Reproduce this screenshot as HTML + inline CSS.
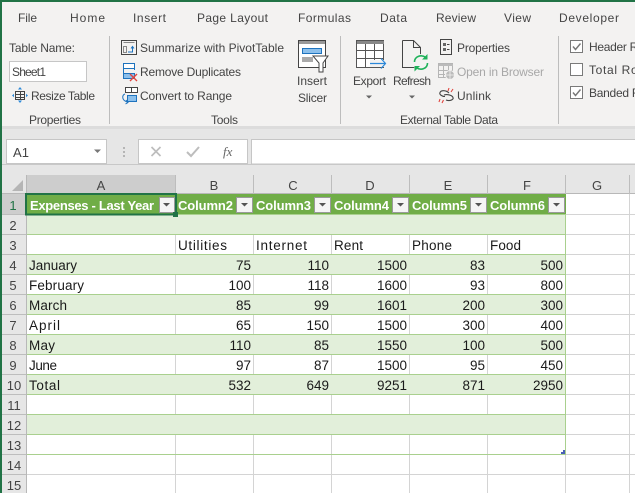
<!DOCTYPE html>
<html><head><meta charset="utf-8"><style>
html,body{margin:0;padding:0;background:#fff;width:635px;height:493px;overflow:hidden}
svg{display:block}
text{font-family:"Liberation Sans",sans-serif;font-size:12px;fill:#444}
.c text,text.c{font-size:13.5px;fill:#1a1a1a}
.h text{font-size:13px;fill:#fff;font-weight:bold}
.rn text{font-size:13px;fill:#444;text-anchor:middle}
.n text{font-size:13.5px;fill:#1a1a1a;text-anchor:end}
.cr{shape-rendering:crispEdges}
</style></head><body>
<svg width="635" height="493" viewBox="0 0 635 493" xmlns="http://www.w3.org/2000/svg">
<!-- ribbon -->
<g class="cr">
<rect width="635" height="493" fill="#fff"/>
<rect width="635" height="128" fill="#f3f2f1"/>
<rect width="635" height="2" fill="#217346"/>
<rect y="126" width="635" height="3" fill="#dcdcdc"/>
<rect y="129" width="635" height="46" fill="#e6e6e6"/>
<rect y="175" width="635" height="19" fill="#e6e6e6"/>
<rect x="109" y="36" width="1" height="88" fill="#bdbdbd"/>
<rect x="340" y="36" width="1" height="88" fill="#bdbdbd"/>
<rect x="558" y="36" width="1" height="88" fill="#bdbdbd"/>
</g>
<text x="18" y="22" textLength="19">File</text>
<text x="70" y="22" textLength="35">Home</text>
<text x="133" y="22" textLength="33">Insert</text>
<text x="197" y="22" textLength="71">Page Layout</text>
<text x="298" y="22" textLength="53">Formulas</text>
<text x="380" y="22" textLength="27">Data</text>
<text x="436" y="22" textLength="40">Review</text>
<text x="504" y="22" textLength="27">View</text>
<text x="559" y="22" textLength="60">Developer</text>

<text x="9" y="52" textLength="66">Table Name:</text>
<rect class="cr" x="9.500" y="61.500" width="77" height="20" fill="#fff" stroke="#c6c6c6"/>
<text x="12" y="76" textLength="34">Sheet1</text>
<text x="31" y="100" textLength="64">Resize Table</text>
<text x="29" y="124" textLength="52">Properties</text>
<text x="140" y="52" textLength="144">Summarize with PivotTable</text>
<text x="140" y="76" textLength="101">Remove Duplicates</text>
<text x="140" y="100" textLength="92">Convert to Range</text>
<text x="211" y="124" textLength="27">Tools</text>
<text x="297" y="85" textLength="30">Insert</text>
<text x="298" y="102" textLength="29">Slicer</text>
<text x="353" y="85" textLength="33">Export</text>
<text x="393" y="85" textLength="38">Refresh</text>
<text x="457" y="52" textLength="53">Properties</text>
<text x="457" y="76" textLength="87" style="fill:#a8a8a8">Open in Browser</text>
<text x="457" y="100" textLength="34">Unlink</text>
<text x="400" y="124" textLength="98">External Table Data</text>
<text x="589" y="51" textLength="64">Header Row</text>
<text x="589" y="74" textLength="58">Total Row</text>
<text x="589" y="97" textLength="72">Banded Rows</text>

<!-- checkboxes -->
<g class="cr" fill="#fff" stroke="#7a7a7a">
<rect x="570.500" y="40.500" width="12" height="12"/>
<rect x="570.500" y="63.500" width="12" height="12"/>
<rect x="570.500" y="86.500" width="12" height="12"/>
</g>
<path d="M573 46.500l2.500 3 5-6M573 92.500l2.500 3 5-6" fill="none" stroke="#777" stroke-width="1.400"/>

<!-- resize icon -->
<g fill="none" stroke="#444" class="cr">
<rect x="15.500" y="91.500" width="9" height="8"/>
<path d="M15 94.500h10M20.500 92v8M15 97.500h10"/>
</g>
<path d="M20 87l2 2.500h-4zM20 103l2-2.500h-4zM12 95.500l2-1.800v3.600zM28 95.500l-2-1.800v3.600z" fill="#2b88d8"/>

<!-- summarize icon -->
<g fill="none" class="cr">
<rect x="121.500" y="40.500" width="15" height="14" stroke="#444"/>
<path d="M123.500 46.500h3v6h-3zM123.500 42.500h11" stroke="#888"/>
</g>
<path d="M128 52h4.500v-5M131 48.500l1.500-2 1.500 2" fill="none" stroke="#1e73be"/>
<!-- remove dup icon -->
<g class="cr">
<rect x="123.500" y="63.500" width="11" height="5" fill="#fff" stroke="#1e73be"/>
<rect x="123.500" y="73.500" width="11" height="5" fill="#8cc0ec" stroke="#1e73be"/>
<rect x="123" y="63" width="1" height="16" fill="#1e73be"/>
<rect x="134" y="63" width="1" height="7" fill="#1e73be"/>
</g>
<path d="M130 74l7 7M137 74l-7 7" stroke="#e0443e" stroke-width="1.400"/>
<!-- convert icon -->
<g class="cr">
<rect x="125.500" y="87.500" width="6" height="5" fill="#fff" stroke="#444"/>
<rect x="131.500" y="87.500" width="6" height="5" fill="#fff" stroke="#444"/>
<rect x="127.500" y="95.500" width="9" height="6" fill="#8cc0ec" stroke="#1e73be"/>
</g>
<path d="M125 94c-3 1-3 5 0 7l3 1.500M126 100l2 2.500-2.500 1.500" fill="none" stroke="#1e73be"/>

<!-- slicer icon -->
<g class="cr">
<rect x="298.500" y="40.500" width="27" height="27" fill="#fff" stroke="#444"/>
<rect x="299" y="41" width="26" height="3" fill="#999"/>
<rect x="302.500" y="48.500" width="19" height="5" fill="#8cc0ec" stroke="#1e73be"/>
<rect x="302" y="57" width="11" height="5" fill="#aaa"/>
</g>
<path d="M313 56h15l-5 7v9h-4v-9z" fill="#fff" stroke="#444"/>

<!-- export icon -->
<g class="cr" fill="none" stroke="#555">
<rect x="356.500" y="40.500" width="27" height="27" fill="#fff" stroke="#555"/>
<rect x="357" y="41" width="27" height="3" fill="#888" stroke="none"/>
<path d="M365.500 44v23M374.500 44v23M357 50.500h27M357 58.500h27"/>
</g>
<path d="M370 63.500h14" stroke="#f3f2f1" stroke-width="7"/>
<path d="M370 63.500h15M381 58.500l4.500 5-4.500 5" fill="none" stroke="#2b88d8" stroke-width="1.200"/>
<path d="M366 95.500h6l-3 3zM409 95.500h6l-3 3z" fill="#666"/>

<!-- refresh icon -->
<path d="M402.500 40.500h11l7 7v12M413.500 41v6.500h7M402.500 40.500v27h12" fill="none" stroke="#444"/>
<circle cx="421" cy="62.500" r="8.500" fill="#f3f2f1"/>
<path d="M414.500 62c0-5.500 6.500-8 11.500-4.500M427.500 63c0 5.500-6.500 8-11.500 4.500" fill="none" stroke="#1fb25a" stroke-width="1.600"/>
<path d="M427.500 54v5.500h-5.500zM414.500 71.500v-5.500h5.500z" fill="#1fb25a"/>

<!-- properties icon -->
<g class="cr" fill="none" stroke="#444">
<rect x="440.500" y="39.500" width="11" height="15"/>
<rect x="443" y="43" width="3" height="3" stroke="none" fill="#666"/>
<rect x="443" y="48" width="3" height="3" stroke="none" fill="#666"/>
<path d="M447 44.500h2.500M447 49.500h2.500"/>
</g>
<!-- open in browser icon -->
<g class="cr" fill="none" stroke="#b5b5b5">
<rect x="438.500" y="63.500" width="14" height="14"/>
<rect x="439" y="64" width="14" height="2" fill="#bbb" stroke="none"/>
<path d="M443.500 66v12M448.500 66v7M439 70.500h14M439 74.500h6"/>
</g>
<circle cx="450" cy="75" r="4.500" fill="#bbb" stroke="#f3f2f1"/>
<path d="M446 75h8M450 71v8" stroke="#f3f2f1" stroke-width=".8"/>
<!-- unlink icon -->
<path d="M449 93c-3-3-8-3-9-.5-1 2 2 4 5 4M444 95c3-1 8 0 9 2.500 1 2-3 4-7 2.500" fill="none" stroke="#444" stroke-width="1.100"/>
<path d="M449 88l-1 3M453 89l-2 3M440 99l-1 3M443.500 100l-1.500 3" stroke="#e0443e" stroke-width="1.100"/>

<!-- formula bar -->
<g class="cr">
<rect x="6.500" y="139.500" width="100" height="24" fill="#fff" stroke="#c6c6c6"/>
<rect x="138.500" y="139.500" width="109" height="24" fill="#fff" stroke="#c6c6c6"/>
<rect x="251.500" y="139.500" width="390" height="24.500" fill="#fff" stroke="#c6c6c6"/>
<rect y="164" width="635" height="1" fill="#c8c8c8"/>
<rect x="123" y="147" width="2" height="2" fill="#b5b5b5"/>
<rect x="123" y="151" width="2" height="2" fill="#b5b5b5"/>
<rect x="123" y="155" width="2" height="2" fill="#b5b5b5"/>
</g>
<text x="13" y="157" textLength="16" style="font-size:13px">A1</text>
<path d="M94 149.500h7l-3.500 3.500z" fill="#777"/>
<path d="M151.500 147l9 9M160.500 147l-9 9" stroke="#bdbdbd" stroke-width="1.700" fill="none"/>
<path d="M187 152l4 4 8-9" stroke="#bdbdbd" stroke-width="2" fill="none"/>
<text x="223" y="156" style="font-family:'Liberation Serif',serif;font-style:italic;font-size:13px;fill:#666">fx</text>

<!-- grid headers -->
<g class="cr">
<rect y="194" width="26" height="299" fill="#e6e6e6"/>
<rect x="27" y="175" width="149" height="19" fill="#cdcdcd"/>
<rect x="2" y="194" width="24" height="20" fill="#cdcdcd"/>
<rect x="26" y="175" width="1" height="318" fill="#b8b8b8"/>
<rect x="2" y="193" width="633" height="1" fill="#b8b8b8"/>
<g fill="#bdbdbd">
<rect x="175" y="175" width="1" height="19"/><rect x="253" y="175" width="1" height="19"/>
<rect x="331" y="175" width="1" height="19"/><rect x="409" y="175" width="1" height="19"/>
<rect x="487" y="175" width="1" height="19"/><rect x="565" y="175" width="1" height="19"/>
<rect x="629" y="175" width="1" height="19"/>
<rect x="2" y="234" width="24" height="1"/><rect x="2" y="254" width="24" height="1"/><rect x="2" y="274" width="24" height="1"/>
<rect x="2" y="294" width="24" height="1"/><rect x="2" y="314" width="24" height="1"/><rect x="2" y="334" width="24" height="1"/>
<rect x="2" y="354" width="24" height="1"/><rect x="2" y="374" width="24" height="1"/><rect x="2" y="394" width="24" height="1"/>
<rect x="2" y="414" width="24" height="1"/><rect x="2" y="434" width="24" height="1"/><rect x="2" y="454" width="24" height="1"/>
<rect x="2" y="474" width="24" height="1"/><rect x="2" y="214" width="24" height="1"/>
</g>
</g>
<path d="M23 191v-11l-11 11z" fill="#b5b5b5"/>
<g class="rn">
<text x="101" y="190">A</text><text x="214" y="190">B</text><text x="293" y="190">C</text>
<text x="370" y="190">D</text><text x="448" y="190">E</text><text x="527" y="190">F</text><text x="597" y="190">G</text>
</g>
<g class="rn">
<text x="13" y="210" style="fill:#217346">1</text><text x="13" y="230">2</text><text x="13" y="250">3</text>
<text x="13" y="270">4</text><text x="13" y="290">5</text><text x="13" y="310">6</text><text x="13" y="330">7</text>
<text x="13" y="350">8</text><text x="13" y="370">9</text><text x="14" y="390">10</text><text x="14" y="410">11</text>
<text x="14" y="430">12</text><text x="14" y="450">13</text><text x="14" y="470">14</text><text x="14" y="490">15</text>
</g>

<!-- cells -->
<g class="cr">
<g fill="#d4d4d4">
<rect x="566" y="214" width="69" height="1"/><rect x="566" y="234" width="69" height="1"/><rect x="566" y="254" width="69" height="1"/>
<rect x="566" y="274" width="69" height="1"/><rect x="566" y="294" width="69" height="1"/><rect x="566" y="314" width="69" height="1"/>
<rect x="566" y="334" width="69" height="1"/><rect x="566" y="354" width="69" height="1"/><rect x="566" y="374" width="69" height="1"/>
<rect x="566" y="394" width="69" height="1"/><rect x="566" y="414" width="69" height="1"/><rect x="566" y="434" width="69" height="1"/>
<rect x="566" y="454" width="69" height="1"/><rect x="27" y="474" width="608" height="1"/>
<rect x="629" y="194" width="1" height="299"/>
<rect x="565" y="454" width="1" height="39"/>
<rect x="175" y="235" width="1" height="19"/><rect x="253" y="235" width="1" height="19"/><rect x="331" y="235" width="1" height="19"/><rect x="409" y="235" width="1" height="19"/><rect x="487" y="235" width="1" height="19"/>
<rect x="175" y="275" width="1" height="19"/><rect x="253" y="275" width="1" height="19"/><rect x="331" y="275" width="1" height="19"/><rect x="409" y="275" width="1" height="19"/><rect x="487" y="275" width="1" height="19"/>
<rect x="175" y="315" width="1" height="19"/><rect x="253" y="315" width="1" height="19"/><rect x="331" y="315" width="1" height="19"/><rect x="409" y="315" width="1" height="19"/><rect x="487" y="315" width="1" height="19"/>
<rect x="175" y="355" width="1" height="19"/><rect x="253" y="355" width="1" height="19"/><rect x="331" y="355" width="1" height="19"/><rect x="409" y="355" width="1" height="19"/><rect x="487" y="355" width="1" height="19"/>
<rect x="175" y="395" width="1" height="19"/><rect x="253" y="395" width="1" height="19"/><rect x="331" y="395" width="1" height="19"/><rect x="409" y="395" width="1" height="19"/><rect x="487" y="395" width="1" height="19"/>
<rect x="175" y="435" width="1" height="19"/><rect x="253" y="435" width="1" height="19"/><rect x="331" y="435" width="1" height="19"/><rect x="409" y="435" width="1" height="19"/><rect x="487" y="435" width="1" height="19"/>
<rect x="175" y="455" width="1" height="38"/><rect x="253" y="455" width="1" height="38"/><rect x="331" y="455" width="1" height="38"/><rect x="409" y="455" width="1" height="38"/><rect x="487" y="455" width="1" height="38"/>
</g>
<g fill="#e2efda">
<rect x="27" y="215" width="538" height="19"/><rect x="27" y="255" width="538" height="19"/><rect x="27" y="295" width="538" height="19"/>
<rect x="27" y="335" width="538" height="19"/><rect x="27" y="375" width="538" height="19"/><rect x="27" y="415" width="538" height="19"/>
</g>
<g fill="#a9d08e">
<rect x="27" y="234" width="539" height="1"/><rect x="27" y="254" width="539" height="1"/><rect x="27" y="274" width="539" height="1"/>
<rect x="27" y="294" width="539" height="1"/><rect x="27" y="314" width="539" height="1"/><rect x="27" y="334" width="539" height="1"/>
<rect x="27" y="354" width="539" height="1"/><rect x="27" y="374" width="539" height="1"/><rect x="27" y="394" width="539" height="1"/>
<rect x="27" y="414" width="539" height="1"/><rect x="27" y="434" width="539" height="1"/><rect x="27" y="454" width="539" height="1"/>
<rect x="565" y="214" width="1" height="241"/><rect x="27" y="214" width="539" height="1"/>
</g>
<rect x="27" y="194" width="539" height="20" fill="#70ad47"/>
<g fill="#f5f5f5" stroke="#9a9a9a">
<rect x="159.500" y="197.500" width="15" height="15"/><rect x="236.500" y="197.500" width="16" height="15"/>
<rect x="314.500" y="197.500" width="16" height="15"/><rect x="392.500" y="197.500" width="16" height="15"/>
<rect x="470.500" y="197.500" width="16" height="15"/><rect x="548.500" y="197.500" width="16" height="15"/>
</g>
<rect x="26" y="194" width="150" height="20.500" fill="none" stroke="#217346" stroke-width="2"/>
<rect x="173" y="212" width="5" height="5" fill="#217346"/>
<rect x="561" y="452" width="4" height="2" fill="#4a5fb5"/><rect x="563" y="450" width="2" height="2" fill="#4a5fb5"/>
<rect x="0" y="0" width="2" height="493" fill="#217346"/>
</g>
<path d="M163 203h7l-3.500 3.500zM241 203h7l-3.500 3.500zM319 203h7l-3.500 3.500zM397 203h7l-3.500 3.500zM475 203h7l-3.500 3.500zM553 203h7l-3.500 3.500z" fill="#555"/>
<g class="h">
<text x="30" y="210" textLength="124">Expenses - Last Year</text>
<text x="178" y="210" textLength="55">Column2</text><text x="256" y="210" textLength="55">Column3</text>
<text x="334" y="210" textLength="55">Column4</text><text x="412" y="210" textLength="55">Column5</text><text x="490" y="210" textLength="55">Column6</text>
</g>
<g class="c">
<text x="178" y="250" textLength="49">Utilities</text><text x="256" y="250" textLength="51">Internet</text><text x="334" y="250" textLength="29">Rent</text>
<text x="412" y="250" textLength="40">Phone</text><text x="490" y="250" textLength="31">Food</text>
<text x="29" y="270" textLength="48">January</text><text x="29" y="290" textLength="55">February</text><text x="29" y="310" textLength="38">March</text>
<text x="29" y="330" textLength="31">April</text><text x="29" y="350" textLength="26">May</text><text x="29" y="370" textLength="28">June</text><text x="29" y="390" textLength="31">Total</text>
</g>
<g class="n">
<text x="251" y="270">75</text><text x="329" y="270">110</text><text x="407" y="270">1500</text><text x="485" y="270">83</text><text x="563" y="270">500</text>
<text x="251" y="290">100</text><text x="329" y="290">118</text><text x="407" y="290">1600</text><text x="485" y="290">93</text><text x="563" y="290">800</text>
<text x="251" y="310">85</text><text x="329" y="310">99</text><text x="407" y="310">1601</text><text x="485" y="310">200</text><text x="563" y="310">300</text>
<text x="251" y="330">65</text><text x="329" y="330">150</text><text x="407" y="330">1500</text><text x="485" y="330">300</text><text x="563" y="330">400</text>
<text x="251" y="350">110</text><text x="329" y="350">85</text><text x="407" y="350">1550</text><text x="485" y="350">100</text><text x="563" y="350">500</text>
<text x="251" y="370">97</text><text x="329" y="370">87</text><text x="407" y="370">1500</text><text x="485" y="370">95</text><text x="563" y="370">450</text>
<text x="251" y="390">532</text><text x="329" y="390">649</text><text x="407" y="390">9251</text><text x="485" y="390">871</text><text x="563" y="390">2950</text>
</g>
</svg>
</body></html>
